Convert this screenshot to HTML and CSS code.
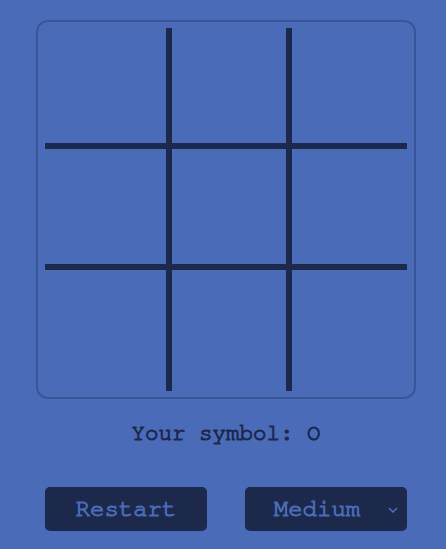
FILE: index.html
```html
<!DOCTYPE html>
<html lang="en">
<head>
    <meta charset="UTF-8">
    <meta name="viewport" content="width=device-width, initial-scale=1.0">
    <title>Tic Tac Toe</title>
    <link rel="stylesheet" href="styles.css">
</head>
<body>
    <div class="game">
        <div class="board">
            <div class="grid">
                <div class="cell"></div>
                <div class="cell"></div>
                <div class="cell"></div>
                <div class="cell"></div>
                <div class="cell"></div>
                <div class="cell"></div>
                <div class="cell"></div>
                <div class="cell"></div>
                <div class="cell"></div>
            </div>
        </div>

        <p class="status">Your symbol: O</p>

        <div class="controls">
            <button class="control-button">Restart</button>
            <div class="select-wrap">
                <select class="control-button level-select">
                    <option>Easy</option>
                    <option selected>Medium</option>
                    <option>Hard</option>
                </select>
                <svg class="select-arrow" width="10" height="6" viewBox="0 0 10 6">
                    <path d="M1 1 L5 5 L9 1" fill="none" stroke="#4a6bb8" stroke-width="1.6"/>
                </svg>
            </div>
        </div>
    </div>
</body>
</html>
```

FILE: styles.css
```css
/* Tablero */
body {
  margin: 0;
  background-color: #4a6bb8;
  font-family: "Nimbus Mono PS", "Nimbus Mono L", FreeMono, "Courier New", "Liberation Mono", monospace;
  color: #1c294b;
}

.game {
  width: 380px;
  padding: 20px 0 0 36px;
}

.board {
  box-sizing: border-box;
  width: 380px;
  height: 379px;
  border: 2px solid #3a5597;
  border-radius: 12px;
  padding: 6px 7px;
}

.grid {
  display: grid;
  grid-template-columns: 121px 114px 115px;
  grid-template-rows: 115px 115px 121px;
  gap: 6px;
  background-color: #1c294b;
}

.cell {
  background-color: #4a6bb8;
}

.status {
  margin: 22px 0 0;
  text-align: center;
  font-size: 22.5px;
  line-height: 26px;
  -webkit-text-stroke: 1px #1c294b;
}

.controls {
  display: flex;
  justify-content: space-between;
  padding: 0 9px;
  margin-top: 40px;
}

.control-button {
  width: 162px;
  height: 44px;
  border: none;
  border-radius: 5px;
  background-color: #1c294b;
  color: #4a6bb8;
  font-family: inherit;
  font-size: 24px;
  -webkit-text-stroke: 1px #4a6bb8;
  cursor: pointer;
}

.select-wrap {
  position: relative;
}

.level-select {
  appearance: none;
  padding: 0 18px 0 0;
  text-align: center;
  text-align-last: center;
}

.select-arrow {
  position: absolute;
  right: 9px;
  top: 20px;
  pointer-events: none;
}
```
